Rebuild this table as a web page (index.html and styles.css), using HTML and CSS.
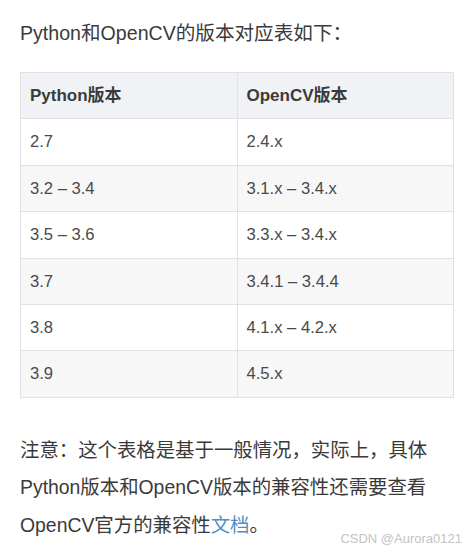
FILE: index.html
```html
<!DOCTYPE html>
<html lang="zh">
<head>
<meta charset="utf-8">
<link rel="stylesheet" href="styles.css">
</head>
<body>
<div class="page">
  <p class="intro">Python和OpenCV的版本对应表如下：</p>
  <table class="ver">
    <thead>
      <tr><th>Python版本</th><th>OpenCV版本</th></tr>
    </thead>
    <tbody>
      <tr><td>2.7</td><td>2.4.x</td></tr>
      <tr><td>3.2 – 3.4</td><td>3.1.x – 3.4.x</td></tr>
      <tr><td>3.5 – 3.6</td><td>3.3.x – 3.4.x</td></tr>
      <tr><td>3.7</td><td>3.4.1 – 3.4.4</td></tr>
      <tr><td>3.8</td><td>4.1.x – 4.2.x</td></tr>
      <tr><td>3.9</td><td>4.5.x</td></tr>
    </tbody>
  </table>
  <p class="note">注意：这个表格是基于一般情况，实际上，具体Python版本和OpenCV版本的兼容性还需要查看OpenCV官方的兼容性<a class="link">文档</a>。</p>
</div>
<div class="mark">CSDN @Aurora0121</div>
</body>
</html>
```
FILE: styles.css
```css
html, body {
  margin: 0;
  padding: 0;
  background: #ffffff;
}
body {
  width: 474px;
  height: 551px;
  overflow: hidden;
  position: relative;
  font-family: "Liberation Sans", "Noto Sans CJK SC", sans-serif;
  color: #3a3a3a;
}
.page {
  padding: 15px 20px 0 20px;
}
.intro {
  margin: 0 0 20px 0;
  font-size: 19.6px;
  line-height: 37px;
  color: #3a3a3a;
}
.ver {
  width: 434px;
  border-collapse: collapse;
  table-layout: fixed;
  font-size: 16.6px;
}
.ver th, .ver td {
  border: 1px solid #dfe1e4;
  padding: 11px 9px;
  line-height: 23.4px;
  text-align: left;
  color: #4a4a4a;
}
.ver th {
  background: #f0f2f5;
  font-weight: bold;
  font-size: 17px;
  color: #3a3a3a;
}
.ver tbody tr:nth-child(even) td {
  background: #f7f7f7;
}
.note {
  margin: 34px 0 0 0;
  font-size: 19.4px;
  line-height: 37.5px;
  color: #3a3a3a;
}
.link {
  color: #4b8fc8;
}
.mark {
  position: absolute;
  right: 12px;
  bottom: 5px;
  font-size: 13px;
  line-height: 15px;
  color: #c4c4c4;
  text-shadow: 0 0 1px #ffffff;
  font-family: "Liberation Sans", sans-serif;
}
```
